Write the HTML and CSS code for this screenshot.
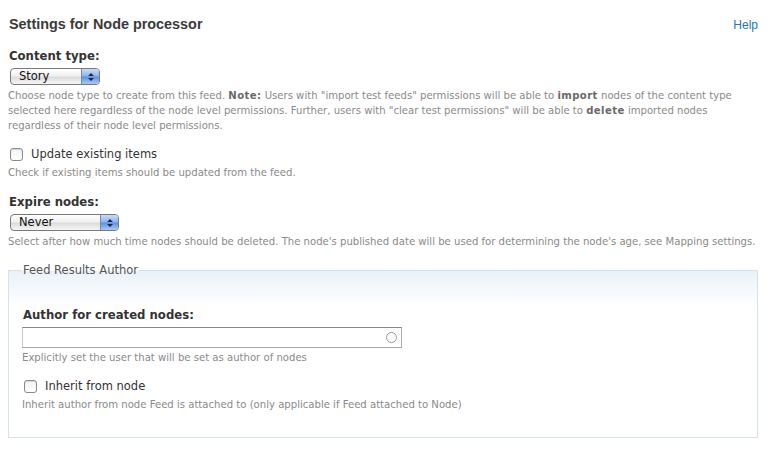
FILE: index.html
```html
<!DOCTYPE html>
<html>
<head>
<meta charset="utf-8">
<link rel="stylesheet" href="styles.css">
</head>
<body>
<div class="page">
  <div class="header">
    <h2 class="title">Settings for Node processor</h2>
    <a class="help" href="#">Help</a>
  </div>

  <div class="item">
    <label class="label">Content type:</label>
    <div class="select sel-story">
      <span class="select-text">Story</span>
      <span class="select-arrows"><svg width="8" height="10" viewBox="0 0 8 10"><path d="M4 1 L7 4 H1 Z M4 9 L7 6 H1 Z" fill="#1b2a4a"/></svg></span>
    </div>
    <div class="desc desc-narrow">Choose node type to create from this feed. <b>Note:</b> Users with "import test feeds" permissions will be able to <b>import</b> nodes of the content type selected here regardless of the node level permissions. Further, users with "clear test permissions" will be able to <b>delete</b> imported nodes regardless of their node level permissions.</div>
  </div>

  <div class="item item-check">
    <div class="check-row"><span class="checkbox"></span><span class="check-label">Update existing items</span></div>
    <div class="desc desc-check">Check if existing items should be updated from the feed.</div>
  </div>

  <div class="item item-after-check">
    <label class="label">Expire nodes:</label>
    <div class="select sel-never">
      <span class="select-text">Never</span>
      <span class="select-arrows"><svg width="8" height="10" viewBox="0 0 8 10"><path d="M4 1 L7 4 H1 Z M4 9 L7 6 H1 Z" fill="#1b2a4a"/></svg></span>
    </div>
    <div class="desc">Select after how much time nodes should be deleted. The node's published date will be used for determining the node's age, see Mapping settings.</div>
  </div>

  <fieldset class="fieldset">
    <legend class="legend">Feed Results Author</legend>
    <div class="item item-first">
      <label class="label">Author for created nodes:</label>
      <div class="textfield"><span class="throbber"></span></div>
      <div class="desc desc-tight">Explicitly set the user that will be set as author of nodes</div>
    </div>
    <div class="item item-check">
      <div class="check-row"><span class="checkbox"></span><span class="check-label">Inherit from node</span></div>
      <div class="desc desc-check">Inherit author from node Feed is attached to (only applicable if Feed attached to Node)</div>
    </div>
  </fieldset>
</div>
</body>
</html>
```

FILE: styles.css
```css
html, body {
  margin: 0;
  padding: 0;
  background: #fff;
}
.page {
  padding: 16px 4px 0 8px;
  font-family: "DejaVu Sans", Verdana, sans-serif;
  color: #333;
}
.header {
  display: flex;
  justify-content: space-between;
  align-items: baseline;
  margin-left: 1px;
  margin-right: 8px;
}
.title {
  margin: 0;
  font-family: "Liberation Sans", Arial, sans-serif;
  font-size: 14.4px;
  font-weight: bold;
  color: #3a3a3a;
  line-height: 16px;
}
.help {
  font-family: "Liberation Sans", Arial, sans-serif;
  font-size: 12px;
  color: #2a78b4;
  text-decoration: none;
}
.item {
  margin-top: 17px;
}
.item-check {
  margin-top: 14px;
}
.item-after-check {
  margin-top: 15px;
}
.label {
  display: block;
  font-size: 11.7px;
  font-weight: bold;
  color: #333;
  line-height: 14px;
  margin-left: 1px;
  margin-bottom: 5px;
}
.select {
  display: flex;
  align-items: stretch;
  height: 15px;
  border: 1px solid #7a7a7a;
  border-radius: 4px;
  margin-left: 2px;
  overflow: hidden;
  background: linear-gradient(#ffffff, #f0f0f0 45%, #dcdcdc 55%, #f6f6f6);
  box-sizing: content-box;
}
.sel-story { width: 88px; }
.sel-never { width: 107px; }
.select-text {
  flex: 1;
  font-size: 11.5px;
  line-height: 15px;
  color: #111;
  padding-left: 8px;
}
.select-arrows {
  width: 17px;
  display: flex;
  align-items: center;
  justify-content: center;
  border-left: 1px solid #6b8cc4;
  background: linear-gradient(#c9dcf7, #8fb3ea 48%, #5d8fdc 52%, #a9c9f3);
}
.desc {
  font-size: 10.1px;
  line-height: 15px;
  color: #8a8a8a;
  margin-top: 3px;
}
.desc-narrow {
  max-width: 740px;
}
.desc-check {
  margin-top: 4px;
}
.desc-tight {
  margin-top: 2px;
}
.desc b {
  color: #6a6a6a;
  letter-spacing: 0.4px;
}
.check-row {
  display: flex;
  align-items: center;
  margin-left: 2px;
}
.checkbox {
  width: 11px;
  height: 11px;
  border: 1px solid #8a8a8a;
  border-radius: 3px;
  background: linear-gradient(#f4f4f4, #ffffff);
  box-shadow: inset 0 1px 1px rgba(0,0,0,0.12);
}
.check-label {
  font-size: 11.5px;
  color: #333;
  margin-left: 8px;
  line-height: 14px;
}
.fieldset {
  margin: 14px 8px 0 0;
  border: 1px solid #d3e2ec;
  padding: 0 13px 25px 13px;
  background: linear-gradient(#e9f2f9, #ffffff 36px);
}
.legend {
  font-size: 11.5px;
  color: #555;
  padding: 0 1px;
  margin-left: 0;
  line-height: 14px;
}
.item-first {
  margin-top: 31px;
}
.textfield {
  position: relative;
  width: 378px;
  height: 19px;
  border: 1px solid #aaa;
  border-top-color: #888;
  border-left-color: #c5c5c5;
  background: #fff;
}
.throbber {
  position: absolute;
  right: 4px;
  top: 4px;
  width: 9px;
  height: 9px;
  border: 1.6px solid #999;
  border-radius: 50%;
}
```
